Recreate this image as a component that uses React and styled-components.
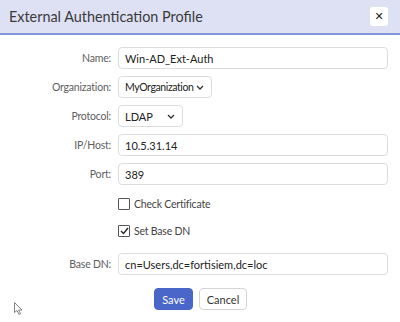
import React from 'react';
import styled, { createGlobalStyle } from 'styled-components';

const Global = createGlobalStyle`
  html, body {
    margin: 0;
    padding: 0;
    background: #ffffff;
  }
  body {
    font-family: Lato, "Open Sans", sans-serif;
  }
  * { box-sizing: border-box; }
`

const Dialog = styled.div`
  width: 400px;
  height: 322px;
  background: #ffffff;
  position: relative;
  overflow: hidden;
`

const Header = styled.div`
  height: 35px;
  background: #dde1f3;
  border-bottom: 2px solid #8196d6;
  display: flex;
  align-items: center;
  justify-content: space-between;
  padding: 0 12px 0 9px;
`

const Title = styled.div`
  font-size: 14.4px;
  color: #3a3a3a;
`

const CloseButton = styled.button`
  width: 18px;
  height: 19px;
  border: none;
  border-radius: 3px;
  background: #ffffff;
  color: #222;
  font-size: 11px;
  font-weight: 700;
  padding: 0;
  font-family: "DejaVu Sans", sans-serif;
  display: flex;
  align-items: center;
  justify-content: center;
`

const Form = styled.div`
  padding: 12px 12px 0 0;
  display: flex;
  flex-direction: column;
`

const Row = styled.div`
  display: grid;
  grid-template-columns: 111px 1fr;
  column-gap: 7px;
  align-items: center;
  height: 22px;
  margin-bottom: ${p => p.gap ?? 7}px;
`

const Label = styled.label`
  text-align: right;
  font-size: 10.5px;
  color: #5e5e5e;
  letter-spacing: -0.2px;
`

const Input = styled.div`
  height: 22px;
  border: 1px solid #dcdcdc;
  border-radius: 4px;
  padding: 0 6px;
  display: flex;
  align-items: center;
  font-size: 11px;
  color: #222;
  white-space: nowrap;
`

const Select = styled(Input)`
  width: ${p => p.width}px;
  justify-content: space-between;
  padding-right: 7px;
  font-size: ${p => p.tight ? 10.5 : 11}px;
  letter-spacing: ${p => p.tight ? -0.4 : 0}px;

  svg { flex-shrink: 0; }
`

const Chevron = () => (
  <svg width="8" height="5" viewBox="0 0 8 5">
    <path d="M1 1 L4 4 L7 1" fill="none" stroke="#333" strokeWidth="1.3" />
  </svg>
);

const CheckRow = styled.div`
  display: flex;
  align-items: center;
  gap: 4px;
  margin-left: 118px;
  height: 14px;
  margin-bottom: ${p => p.gap}px;
  font-size: 10.5px;
  color: #444;
  letter-spacing: -0.2px;
`

const Box = styled.span`
  width: 12px;
  height: 12px;
  border: 1px solid #555;
  border-radius: 1px;
  display: inline-flex;
  align-items: center;
  justify-content: center;
`

const Buttons = styled.div`
  display: flex;
  justify-content: center;
  gap: 6px;
  padding-left: 13px;
`

const Button = styled.button`
  height: 22px;
  width: ${p => p.width}px;
  padding: 0;
  border-radius: 4px;
  font-family: inherit;
  font-size: 11px;
  border: 1px solid ${p => p.primary ? '#4a66c8' : '#d4d4d4'};
  background: ${p => p.primary ? '#4a66c8' : '#ffffff'};
  color: ${p => p.primary ? '#ffffff' : '#333'};
`

const Cursor = styled.svg`
  position: absolute;
  left: 14px;
  top: 302px;
`

export default function App() {
  return (
    <Dialog>
      <Global />
      <Header>
        <Title>External Authentication Profile</Title>
        <CloseButton>✕</CloseButton>
      </Header>
      <Form>
        <Row>
          <Label>Name:</Label>
          <Input>Win-AD_Ext-Auth</Input>
        </Row>
        <Row>
          <Label>Organization:</Label>
          <Select width={94} tight>MyOrganization<Chevron /></Select>
        </Row>
        <Row>
          <Label>Protocol:</Label>
          <Select width={65}>LDAP<Chevron /></Select>
        </Row>
        <Row>
          <Label>IP/Host:</Label>
          <Input>10.5.31.14</Input>
        </Row>
        <Row gap={12}>
          <Label>Port:</Label>
          <Input>389</Input>
        </Row>
        <CheckRow gap={13}>
          <Box />
          Check Certificate
        </CheckRow>
        <CheckRow gap={15}>
          <Box>
            <svg width="9" height="8" viewBox="0 0 9 8">
              <path d="M1 4 L3.5 6.5 L8 1" fill="none" stroke="#222" strokeWidth="1.3" />
            </svg>
          </Box>
          Set Base DN
        </CheckRow>
        <Row gap={13}>
          <Label>Base DN:</Label>
          <Input>cn=Users,dc=fortisiem,dc=loc</Input>
        </Row>
        <Buttons>
          <Button primary width={39}>Save</Button>
          <Button width={48}>Cancel</Button>
        </Buttons>
      </Form>
      <Cursor width="9" height="14" viewBox="0 0 9 14">
        <path d="M0.5 0.5 L0.5 10.5 L3 8.5 L5 12.5 L6.5 11.8 L4.6 8 L8 8 Z" fill="#fff" stroke="#666" strokeWidth="0.8" />
      </Cursor>
    </Dialog>
  );
}
